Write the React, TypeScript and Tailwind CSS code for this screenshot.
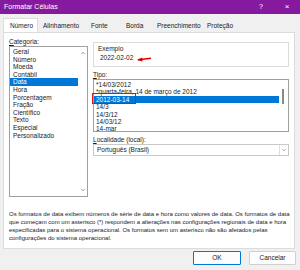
import { ChevronDown, ChevronUp } from 'lucide-react';

const categories = [
  'Geral',
  'Número',
  'Moeda',
  'Contábil',
  'Data',
  'Hora',
  'Porcentagem',
  'Fração',
  'Científico',
  'Texto',
  'Especial',
  'Personalizado',
];

const tipos = [
  '*14/03/2012',
  '*quarta-feira, 14 de março de 2012',
  '2012-03-14',
  '14/3',
  '14/3/12',
  '14/03/12',
  '14-mar',
];

// tab label + box width, so labels sit where the dialog puts them
const tabs = [
  { label: 'Alinhamento', w: 'w-[48px]' },
  { label: 'Fonte', w: 'w-[35px]' },
  { label: 'Borda', w: 'w-[31px]' },
  { label: 'Preenchimento', w: 'w-[50px]' },
  { label: 'Proteção', w: 'w-[48px]' },
];

export default function App() {
  return (
    <div
      className="w-[300px] h-[270px] bg-[#f0f0f0] flex flex-col overflow-hidden text-[6.5px] text-[#1a1a1a]"
      style={{ fontFamily: '"Liberation Sans", Arial, sans-serif' }}
    >
      {/* Title bar */}
      <div className="h-[14px] bg-[#861a9e] flex items-center pl-[4px] text-white">
        <span className="flex-1 text-[7px]">Formatar Células</span>
        <span className="w-[10px] text-center mr-[16px] text-[7px]">?</span>
        <span className="w-[10px] text-center mr-[8px] text-[8px]">×</span>
      </div>

      {/* Tabs */}
      <div className="h-[16px] mt-[2px] flex items-end px-[3px]">
        <div className="w-[35px] h-[14px] bg-white border border-b-0 border-[#dcdcdc] flex items-center pl-[6px]">
          Número
        </div>
        {tabs.map((t) => (
          <div key={t.label} className={`${t.w} h-[13px] flex items-center pl-[5px] whitespace-nowrap`}>
            {t.label}
          </div>
        ))}
      </div>

      {/* Panel */}
      <div className="mx-[3px] w-[292px] h-[217px] bg-white border border-[#dcdcdc] flex flex-col pt-[4px] px-[5px]">
        <div className="flex">
          {/* Categoria */}
          <div className="w-[79px] flex flex-col">
            <div className="h-[9px] leading-[9px]">
              <span className="underline">C</span>ategoria:
            </div>
            <div className="h-[151px] border border-[#a0a0a0] relative pt-[1px]">
              {categories.map((c) => (
                <div
                  key={c}
                  className={
                    c === 'Data'
                      ? 'h-[7.6px] leading-[7.6px] pl-[3px] mr-[9px] bg-[#0078d7] text-white'
                      : 'h-[7.6px] leading-[7.6px] pl-[3px]'
                  }
                >
                  {c}
                </div>
              ))}
              <ChevronUp className="absolute right-[1px] top-[3px] w-[6px] h-[6px] text-[#777]" strokeWidth={3} />
              <ChevronDown className="absolute right-[1px] bottom-[3px] w-[6px] h-[6px] text-[#777]" strokeWidth={3} />
            </div>
          </div>

          {/* Right column */}
          <div className="ml-[5px] w-[196px] flex flex-col">
            {/* Exemplo */}
            <div className="mt-[5px] h-[25px] border border-[#dcdcdc] pl-[4px] pt-[1px]">
              <div className="h-[9px] leading-[9px]">Exemplo</div>
              <div className="flex items-center h-[10px] pl-[2px]">
                <span>2022-02-02</span>
                <svg width="15" height="6" viewBox="0 0 15 6" className="ml-[4px] mt-[1px]">
                  <path d="M1 3.8 L14 2.2" stroke="#e00000" strokeWidth="1.4" />
                  <path d="M0 4 L5 1.5 L5.6 5.6 Z" fill="#e00000" />
                </svg>
              </div>
            </div>

            <div className="mt-[3px] h-[9px] leading-[9px]">
              <span className="underline">T</span>ipo:
            </div>
            <div className="h-[53px] border border-[#a0a0a0] relative pt-[1px]">
              {tipos.map((t) => (
                <div
                  key={t}
                  className={
                    t === '2012-03-14'
                      ? 'h-[7.4px] leading-[7.4px] pl-[2px] mr-[9px] bg-[#0078d7] text-white relative'
                      : 'h-[7.4px] leading-[7.4px] pl-[2px]'
                  }
                >
                  {t}
                  {t === '2012-03-14' && (
                    <div className="absolute left-[-2px] top-[-3px] w-[44px] h-[11px] border-[1.5px] border-[#e01010]" />
                  )}
                </div>
              ))}
              <div className="absolute right-[4px] top-[9px] w-[2px] h-[15px] bg-[#8a8a8a]" />
            </div>

            <div className="mt-[3px] h-[9px] leading-[9px]">
              <span className="underline">L</span>ocalidade (local):
            </div>
            <div className="h-[12px] border border-[#c8c8c8] flex items-center pl-[3px] relative">
              <span className="flex-1">Português (Brasil)</span>
              <div className="w-[9px] h-[10px] border-l border-[#e0e0e0] flex items-center justify-center">
                <ChevronDown className="w-[6px] h-[6px] text-[#777]" strokeWidth={2.5} />
              </div>
            </div>
          </div>
        </div>

        {/* Description */}
        <div className="mt-[13px] leading-[8px] whitespace-nowrap text-[6px]">
          Os formatos de data exibem números de série de data e hora como valores de data. Os formatos de data
          <br />
          que começam com um asterisco (*) respondem a alterações nas configurações regionais de data e hora
          <br />
          especificadas para o sistema operacional. Os formatos sem um asterisco não são afetados pelas
          <br />
          configurações do sistema operacional.
        </div>
      </div>

      {/* Buttons */}
      <div className="flex justify-end gap-[8px] mt-[2px] pr-[4px]">
        <button className="w-[48px] h-[14px] bg-[#fdfdfd] border border-[#0078d7] rounded-[1px] text-[6.5px]">
          OK
        </button>
        <button className="w-[47px] h-[14px] bg-[#fdfdfd] border border-[#d0d0d0] rounded-[1px] text-[6.5px]">
          Cancelar
        </button>
      </div>
    </div>
  );
}
